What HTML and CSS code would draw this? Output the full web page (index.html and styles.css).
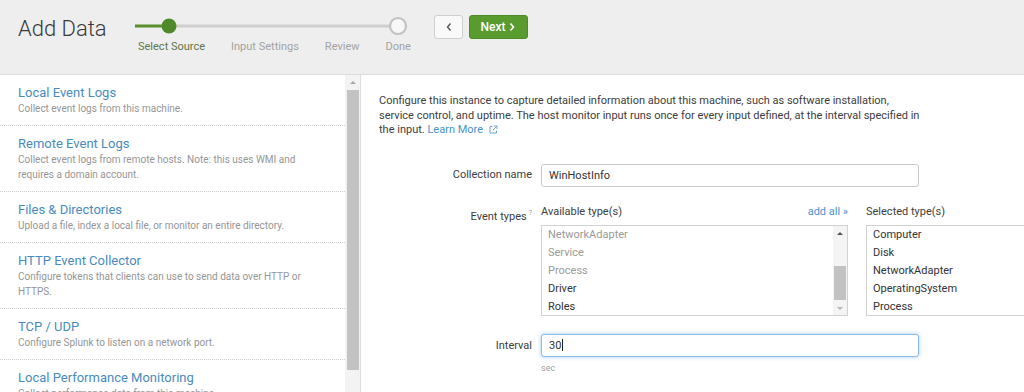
FILE: index.html
```html
<!DOCTYPE html>
<html>
<head>
<meta charset="utf-8">
<link rel="stylesheet" href="styles.css">
</head>
<body>
<header class="header">
  <h1 class="title">Add Data</h1>
  <div class="stepper">
    <svg class="track" width="280" height="22" viewBox="0 0 280 22">
      <line x1="2" y1="11" x2="36" y2="11" stroke="#5a8f2f" stroke-width="3"/>
      <line x1="36" y1="11" x2="257" y2="11" stroke="#cfcfcf" stroke-width="3"/>
      <circle cx="36" cy="11" r="7.5" fill="#4f8a2a"/>
      <circle cx="265" cy="11" r="8" fill="#f7f7f7" stroke="#c2c2c2" stroke-width="2.2"/>
    </svg>
    <div class="step-labels">
      <span class="step active">Select Source</span>
      <span class="step">Input Settings</span>
      <span class="step">Review</span>
      <span class="step">Done</span>
    </div>
  </div>
  <div class="nav">
    <button class="btn back"><svg width="8" height="10" viewBox="0 0 8 10"><path d="M5.5 1.5 L2.5 5 L5.5 8.5" fill="none" stroke="#555" stroke-width="1.4"/></svg></button>
    <button class="btn next">Next<svg width="8" height="10" viewBox="0 0 8 10"><path d="M2.5 1.5 L5.5 5 L2.5 8.5" fill="none" stroke="#fff" stroke-width="1.6"/></svg></button>
  </div>
</header>
<main class="main">
  <aside class="sidebar">
    <ul class="sources">
      <li class="source"><div class="src-title">Local Event Logs</div><div class="src-desc">Collect event logs from this machine.</div></li>
      <li class="source"><div class="src-title">Remote Event Logs</div><div class="src-desc">Collect event logs from remote hosts. Note: this uses WMI and requires a domain account.</div></li>
      <li class="source"><div class="src-title">Files &amp; Directories</div><div class="src-desc">Upload a file, index a local file, or monitor an entire directory.</div></li>
      <li class="source"><div class="src-title">HTTP Event Collector</div><div class="src-desc">Configure tokens that clients can use to send data over HTTP or HTTPS.</div></li>
      <li class="source"><div class="src-title">TCP / UDP</div><div class="src-desc">Configure Splunk to listen on a network port.</div></li>
      <li class="source"><div class="src-title">Local Performance Monitoring</div><div class="src-desc">Collect performance data from this machine.</div></li>
    </ul>
    <div class="vscroll">
      <div class="arrow-up"></div>
      <div class="thumb"></div>
    </div>
  </aside>
  <section class="content">
    <p class="intro">Configure this instance to capture detailed information about this machine, such as software installation, service control, and uptime. The host monitor input runs once for every input defined, at the interval specified in the input. <a class="link">Learn More</a><svg class="ext" width="9" height="9" viewBox="0 0 9 9"><path d="M3.5 1.5 H1 V8 H7.5 V5.5" fill="none" stroke="#6fa6cf" stroke-width="1"/><path d="M5 1 H8 V4 M8 1 L4 5" fill="none" stroke="#6fa6cf" stroke-width="1"/></svg></p>

    <div class="row row-name">
      <label class="label">Collection name</label>
      <div class="input">WinHostInfo</div>
    </div>

    <div class="row row-types">
      <label class="label label-types">Event types<sup class="q">?</sup></label>
      <div class="pickers">
        <div class="picker">
          <div class="picker-head"><span>Available type(s)</span><a class="link">add all »</a></div>
          <div class="listbox">
            <ul class="options">
              <li class="opt used">NetworkAdapter</li>
              <li class="opt used">Service</li>
              <li class="opt used">Process</li>
              <li class="opt">Driver</li>
              <li class="opt">Roles</li>
            </ul>
            <div class="lscroll">
              <div class="l-up"></div>
              <div class="l-thumb"></div>
              <div class="l-down"></div>
            </div>
          </div>
        </div>
        <div class="picker">
          <div class="picker-head"><span>Selected type(s)</span></div>
          <div class="listbox">
            <ul class="options">
              <li class="opt">Computer</li>
              <li class="opt">Disk</li>
              <li class="opt">NetworkAdapter</li>
              <li class="opt">OperatingSystem</li>
              <li class="opt">Process</li>
            </ul>
          </div>
        </div>
      </div>
    </div>

    <div class="row row-interval">
      <label class="label">Interval</label>
      <div class="field">
        <div class="input focused">30<span class="caret"></span></div>
        <div class="help">sec</div>
      </div>
    </div>
  </section>
</main>
</body>
</html>
```

FILE: styles.css
```css
* { box-sizing: border-box; }
html, body { margin: 0; padding: 0; }
body {
  width: 1024px;
  height: 392px;
  overflow: hidden;
  font-family: Roboto, "Liberation Sans", sans-serif;
  color: #333;
  background: #fff;
}
ul { margin: 0; padding: 0; list-style: none; }

.header {
  height: 75px;
  background: #eeeeee;
  border-bottom: 1px solid #dcdcdc;
  display: flex;
  align-items: flex-start;
}
.title {
  flex: 0 0 133px;
  margin: 0;
  padding: 16px 0 0 18px;
  font-size: 22px;
  line-height: 26px;
  font-weight: 300;
  color: #3a3a3a;
}
.stepper {
  margin-top: 15px;
  display: flex;
  flex-direction: column;
}
.track { display: block; }
.step-labels {
  display: flex;
  gap: 26px;
  padding-left: 5px;
  margin-top: 3px;
  font-size: 11px;
  line-height: 14px;
  color: #a3a3a3;
}
.step.active { color: #61764b; }

.nav {
  display: flex;
  gap: 6px;
  margin: 15px 0 0 21px;
}
.btn {
  height: 24px;
  border-radius: 3px;
  font-family: Roboto, "Liberation Sans", sans-serif;
  padding: 0;
  display: flex;
  align-items: center;
  justify-content: center;
}
.back {
  width: 29px;
  background: #f9f9f9;
  border: 1px solid #cfcfcf;
}
.next {
  width: 59px;
  background: #5a9b30;
  border: 1px solid #4e8a28;
  color: #fff;
  font-size: 12px;
  font-weight: 500;
  gap: 3px;
}

.main {
  display: flex;
  height: 317px;
  overflow: hidden;
}
.sidebar {
  flex: 0 0 361px;
  display: flex;
  border-right: 1px solid #dedede;
}
.sources {
  flex: 0 0 345px;
}
.source {
  padding: 10px 0 9px 18px;
  border-bottom: 1px dotted #cfcfcf;
}
.src-title {
  font-size: 13px;
  line-height: 16px;
  color: #4a8bbd;
}
.src-desc {
  font-size: 10px;
  line-height: 15px;
  color: #969696;
  padding-right: 40px;
}
.vscroll {
  flex: 0 0 15px;
  background: #f3f3f3;
  display: flex;
  flex-direction: column;
  align-items: center;
}
.arrow-up {
  margin-top: 6px;
  width: 0;
  height: 0;
  border-left: 3px solid transparent;
  border-right: 3px solid transparent;
  border-bottom: 3px solid #a8a8a8;
}
.thumb {
  margin-top: 6px;
  width: 12px;
  height: 280px;
  background: #c3c3c3;
}

.content {
  flex: 1;
  padding: 19px 0 0 18px;
  min-width: 0;
}
.intro {
  margin: 0;
  width: 546px;
  font-size: 11px;
  line-height: 14.5px;
  color: #3d3d3d;
}
.link { color: #4a93c9; text-decoration: none; }
.ext { margin-left: 6px; vertical-align: -1px; }

.row {
  display: flex;
  gap: 9px;
}
.label {
  flex: 0 0 153px;
  text-align: right;
  font-size: 11px;
  line-height: 14px;
  color: #3d3d3d;
}
.row-name { margin-top: 26px; align-items: center; }
.input {
  width: 378px;
  height: 23px;
  border: 1px solid #c9c9c9;
  border-radius: 3px;
  padding: 0 7px;
  font-size: 11px;
  line-height: 21px;
  color: #333;
  background: #fff;
  display: flex;
  align-items: center;
}
.focused {
  border-color: #8fbbe4;
  box-shadow: 0 0 4px rgba(90, 160, 225, 0.55);
}
.caret {
  display: inline-block;
  width: 1px;
  height: 12px;
  background: #222;
  margin-left: 0.5px;
}

.row-types { margin-top: 18px; }
.label-types { padding-top: 5px; }
.q {
  font-size: 7px;
  color: #999;
  margin-left: 2px;
  vertical-align: 5px;
  line-height: 0;
}
.pickers {
  display: flex;
  gap: 18px;
}
.picker { flex: 0 0 307px; }
.picker-head {
  display: flex;
  justify-content: space-between;
  font-size: 11px;
  line-height: 14px;
  color: #3d3d3d;
  margin-bottom: 6px;
}
.listbox {
  height: 91px;
  border: 1px solid #d2d2d2;
  display: flex;
}
.options {
  flex: 1;
  padding-top: 0;
}
.opt {
  font-size: 11px;
  line-height: 18px;
  padding-left: 6px;
  color: #333;
}
.opt.used { color: #9a9a9a; }
.lscroll {
  flex: 0 0 14px;
  background: #f4f4f4;
  display: flex;
  flex-direction: column;
  align-items: center;
}
.l-up {
  margin-top: 6px;
  width: 0;
  height: 0;
  border-left: 3px solid transparent;
  border-right: 3px solid transparent;
  border-bottom: 3px solid #555;
}
.l-thumb {
  margin-top: 31px;
  width: 12px;
  height: 34px;
  background: #c2c2c2;
}
.l-down {
  margin-top: 7px;
  width: 0;
  height: 0;
  border-left: 3px solid transparent;
  border-right: 3px solid transparent;
  border-top: 3px solid #b5b5b5;
}

.row-interval { margin-top: 18px; }
.row-interval .label { line-height: 23px; }
.help {
  margin-top: 5px;
  font-size: 9px;
  line-height: 12px;
  color: #a0a0a0;
}
```
